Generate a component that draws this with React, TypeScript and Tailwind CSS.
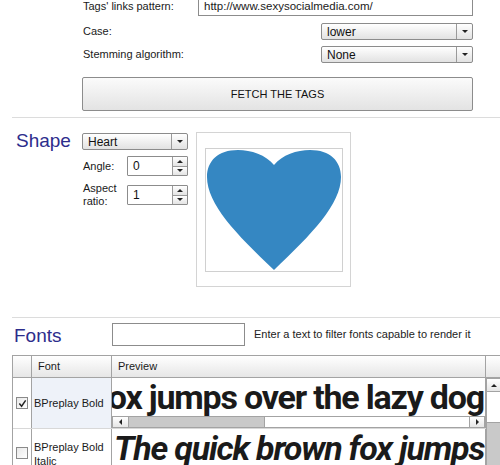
import React from 'react';

const Arrow = ({ dir }: { dir: 'down' | 'up' | 'left' | 'right' }) => {
  const pts = {
    down: '0,0 6,0 3,3',
    up: '0,3 6,3 3,0',
    left: '3,0 3,6 0,3',
    right: '0,0 0,6 3,3',
  }[dir];
  const vb = dir === 'left' || dir === 'right' ? '0 0 3 6' : '0 0 6 3';
  const size = dir === 'left' || dir === 'right' ? 'w-[3px] h-[6px]' : 'w-[6px] h-[3px]';
  return (
    <svg viewBox={vb} className={size}>
      <polygon points={pts} fill="#222" />
    </svg>
  );
};

const Select = ({ value, className }: { value: string; className: string }) => (
  <div className={`flex border border-[#8c8c8c] rounded-[2px] bg-gradient-to-b from-white to-[#e2e2e2] ${className}`}>
    <div className="flex-1 flex items-center pl-[5px] text-[12px] text-[#111] leading-none">{value}</div>
    <div className="w-[16px] border-l border-[#9a9a9a] flex items-center justify-center">
      <Arrow dir="down" />
    </div>
  </div>
);

const Spinner = ({ value }: { value: string }) => (
  <div className="flex w-[61px] h-[20px] border border-[#8c8c8c] rounded-[1px] bg-white">
    <div className="flex-1 flex items-center pl-[5px] text-[12px] text-[#111]">{value}</div>
    <div className="w-[15px] flex flex-col border-l border-[#9a9a9a]">
      <div className="flex-1 flex items-center justify-center bg-gradient-to-b from-white to-[#e4e4e4] border-b border-[#9a9a9a]">
        <Arrow dir="up" />
      </div>
      <div className="flex-1 flex items-center justify-center bg-gradient-to-b from-white to-[#e4e4e4]">
        <Arrow dir="down" />
      </div>
    </div>
  </div>
);

const Checkbox = ({ checked }: { checked?: boolean }) => (
  <div className="w-[12px] h-[12px] border border-[#8a8a8a] bg-gradient-to-br from-[#e8e8e8] to-white flex items-center justify-center">
    {checked && (
      <svg viewBox="0 0 10 10" className="w-[9px] h-[9px]">
        <polyline points="1.5,5 4,8 8.5,1.5" fill="none" stroke="#222" strokeWidth="1.6" />
      </svg>
    )}
  </div>
);

export default function App() {
  const sentence = 'The quick brown fox jumps over the lazy dog';

  return (
    <div className="w-[500px] h-[465px] overflow-hidden bg-white text-[#1a1a1a] font-['Liberation_Sans',Arial,sans-serif] text-[11px]">
      {/* Tags settings */}
      <div className="pl-[83px] pr-[27px]">
        <div className="flex items-center h-[20px] -mt-[4px]">
          <div className="w-[115px]">Tags' links pattern:</div>
          <div className="flex-1 h-[20px] border border-[#8c8c8c] bg-white flex items-center pl-[5px] pt-[2px] text-[11.5px]">
            http://www.sexysocialmedia.com/
          </div>
        </div>
        <div className="flex items-center justify-between mt-[7px] h-[17px]">
          <div>Case:</div>
          <Select value="lower" className="w-[152px] h-[17px]" />
        </div>
        <div className="flex items-center justify-between mt-[6px] h-[17px]">
          <div>Stemming algorithm:</div>
          <Select value="None" className="w-[152px] h-[17px]" />
        </div>
        <button className="mt-[14px] -ml-[1px] w-[391px] h-[34px] border border-[#8c8c8c] rounded-[2px] bg-gradient-to-b from-[#fbfbfb] to-[#e3e3e3] text-[11px] text-[#111] flex items-center justify-center">
          FETCH THE TAGS
        </button>
      </div>

      <div className="ml-[12px] mt-[6px] h-px bg-[#dcdcdc]" />

      {/* Shape */}
      <div className="flex mt-[14px]">
        <div className="w-[82px] pl-[16px] text-[19px] leading-none text-[#2d2d8c] -mt-[1px]">Shape</div>
        <div className="w-[106px] flex flex-col">
          <Select value="Heart" className="w-[106px] h-[17px] mt-[1px]" />
          <div className="flex items-center justify-between mt-[6px] pl-[1px]">
            <div>Angle:</div>
            <Spinner value="0" />
          </div>
          <div className="flex items-center justify-between mt-[6px] pl-[1px]">
            <div className="leading-[13px]">
              Aspect
              <br />
              ratio:
            </div>
            <Spinner value="1" />
          </div>
        </div>
        <div className="ml-[8px] w-[155px] h-[155px] border border-[#d4d4d4] pt-[15px] pl-[8px]">
          <div className="w-[138px] h-[124px] border border-[#d0d0d0]">
            <svg viewBox="0 0 136 122" className="w-[136px] h-[122px]">
              <path
                d="M68 16 C 60 6, 45 1, 32 1 C 12 1, 1 12, 1 28 C 1 55, 30 85, 68 121 C 106 85, 135 55, 135 28 C 135 12, 124 1, 104 1 C 91 1, 76 6, 68 16 Z"
                fill="#3587c2"
              />
            </svg>
          </div>
        </div>
      </div>

      <div className="ml-[12px] mt-[30px] h-px bg-[#dcdcdc]" />

      {/* Fonts */}
      <div className="flex items-center mt-[5px] h-[23px]">
        <div className="w-[112px] pl-[14px] text-[19px] leading-none text-[#2d2d8c] mt-[2px]">Fonts</div>
        <div className="w-[133px] h-[23px] border border-[#8c8c8c] bg-white" />
        <div className="ml-[9px] text-[11px] text-[#222]">Enter a text to filter fonts capable to render it</div>
      </div>

      <div className="ml-[12px] mt-[9px] w-[500px] border-t border-l border-[#a3a3a3]">
        {/* header */}
        <div className="flex h-[22px] border-b border-[#a3a3a3] bg-gradient-to-b from-white to-[#e6e6e6]">
          <div className="w-[19px] border-r border-[#a3a3a3]" />
          <div className="w-[80px] border-r border-[#a3a3a3] pl-[6px] flex items-center">Font</div>
          <div className="w-[374px] border-r border-[#a3a3a3] pl-[6px] flex items-center">Preview</div>
          <div className="flex-1" />
        </div>
        <div className="flex">
          <div className="w-[473px] flex flex-col">
            {/* row 1 */}
            <div className="flex h-[51px] border-b border-[#d8d8d8]">
              <div className="w-[19px] border-r border-[#a3a3a3] flex items-center justify-center">
                <Checkbox checked />
              </div>
              <div className="w-[80px] border-r border-[#a3a3a3] bg-[#eef2f9] flex items-center pl-[2px]">
                BPreplay Bold
              </div>
              <div className="w-[374px] flex flex-col border-r border-[#a3a3a3]">
                <div className="h-[38px] overflow-hidden flex justify-end items-end pr-[1px]">
                  <div className="whitespace-nowrap font-['Roboto',sans-serif] font-bold text-[34px] leading-none tracking-[-1.2px] pb-[2px]">
                    {sentence}
                  </div>
                </div>
                <div className="h-[12px] flex border border-[#a3a3a3] bg-white">
                  <div className="w-[16px] border-r border-[#a3a3a3] flex items-center justify-center bg-gradient-to-b from-white to-[#e6e6e6]">
                    <Arrow dir="left" />
                  </div>
                  <div className="w-[136px] bg-[#c9c9c9] border-r border-[#a3a3a3]" />
                  <div className="flex-1" />
                  <div className="w-[15px] border-l border-[#a3a3a3] flex items-center justify-center bg-gradient-to-b from-white to-[#e6e6e6]">
                    <Arrow dir="right" />
                  </div>
                </div>
              </div>
            </div>
            {/* row 2 */}
            <div className="flex h-[40px]">
              <div className="w-[19px] border-r border-[#a3a3a3] flex items-center justify-center pt-[8px]">
                <Checkbox />
              </div>
              <div className="w-[80px] border-r border-[#a3a3a3] pl-[2px] pt-[11px] leading-[14px]">
                BPreplay Bold
                <br />
                Italic
              </div>
              <div className="w-[374px] overflow-hidden border-r border-[#a3a3a3] pl-[2px] pt-[2px]">
                <div className="whitespace-nowrap font-['Roboto',sans-serif] font-bold italic text-[34px] leading-none tracking-[-1.2px]">
                  {sentence}
                </div>
              </div>
            </div>
          </div>
          {/* vertical scrollbar */}
          <div className="w-[15px] flex flex-col">
            <div className="h-[14px] border border-[#a3a3a3] flex items-center justify-center bg-gradient-to-b from-white to-[#e6e6e6]">
              <Arrow dir="up" />
            </div>
            <div className="h-[30px] border-x border-[#a3a3a3] bg-white" />
            <div className="flex-1 bg-[#c9c9c9] border border-[#a3a3a3]" />
          </div>
        </div>
      </div>
    </div>
  );
}
